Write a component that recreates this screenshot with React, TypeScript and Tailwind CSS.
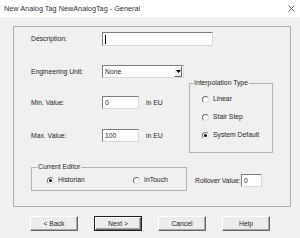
import React from "react";

function Radio({ label, checked, className = "" }: { label: string; checked?: boolean; className?: string }) {
  return (
    <div className={`flex items-center h-[8px] gap-[4px] ${className}`}>
      <span className="w-[7px] h-[7px] rounded-full bg-white border border-t-[#6e6e6e] border-l-[#6e6e6e] border-b-[#dcdcdc] border-r-[#dcdcdc] flex items-center justify-center shrink-0">
        {checked && <span className="w-[3px] h-[3px] rounded-full bg-black" />}
      </span>
      <span>{label}</span>
    </div>
  );
}

function TextBox({ value, w, h = 13, caret }: { value?: string; w: number; h?: number; caret?: boolean }) {
  return (
    <div
      className="bg-white border border-t-[#7f7f7f] border-l-[#7f7f7f] border-b-[#d9d9d9] border-r-[#d9d9d9] flex items-center pl-[2px]"
      style={{ width: w, height: h }}
    >
      {caret && <span className="w-px h-[9px] bg-black" />}
      {value}
    </div>
  );
}

function Button({ label, def }: { label: string; def?: boolean }) {
  return (
    <div className={`h-[15px] w-[48px] ${def ? "border border-[#222]" : ""}`}>
      <div className="h-full w-full bg-[#ececec] border border-t-white border-l-white border-b-[#696969] border-r-[#696969] shadow-[inset_-1px_-1px_0_#a6a6a6] flex items-center justify-center">
        {label}
      </div>
    </div>
  );
}

export default function App() {
  return (
    <div className="w-[300px] h-[238px] bg-[#f0f0f0] text-[#1f1f1f] text-[6.8px] leading-[8px] font-['Liberation_Sans',Arial,sans-serif] overflow-hidden">
      {/* title bar */}
      <div className="h-[17px] bg-white flex items-center pl-[4px] pr-[5px] text-[7.3px] text-[#333]">
        <span className="flex-1">New Analog Tag NewAnalogTag - General</span>
        <svg width="7" height="7" viewBox="0 0 7 7" className="text-[#555]">
          <path d="M0.5 0.5 L6.5 6.5 M6.5 0.5 L0.5 6.5" stroke="currentColor" strokeWidth="0.9" />
        </svg>
      </div>

      {/* main panel */}
      <div className="ml-[13px] mt-[9px] w-[278px] h-[181px] border border-[#b0b0b0] pl-[17px] pt-[5px]">
        <div className="flex items-center h-[14px]">
          <span className="w-[71px]">Description:</span>
          <TextBox w={111} h={14} caret />
        </div>

        <div className="flex items-center h-[13px] mt-[19px]">
          <span className="w-[71px]">Engineering Unit:</span>
          <div className="w-[82px] h-[13px] bg-white border border-t-[#7f7f7f] border-l-[#7f7f7f] border-b-[#d9d9d9] border-r-[#d9d9d9] flex items-center pl-[2px] pr-px">
            <span className="flex-1">None</span>
            <span className="w-[8px] h-[11px] bg-[#ececec] border border-t-white border-l-white border-b-[#696969] border-r-[#696969] flex items-center justify-center">
              <svg width="5" height="3" viewBox="0 0 5 3">
                <path d="M0 0 H5 L2.5 3 Z" fill="#000" />
              </svg>
            </span>
          </div>
        </div>

        <div className="flex">
          <div className="w-[158px]">
            <div className="flex items-center h-[13px] mt-[18px]">
              <span className="w-[71px]">Min. Value:</span>
              <TextBox value="0" w={37} />
              <span className="ml-[7px]">in EU</span>
            </div>
            <div className="flex items-center h-[13px] mt-[20px]">
              <span className="w-[71px]">Max. Value:</span>
              <TextBox value="100" w={37} />
              <span className="ml-[7px]">in EU</span>
            </div>
          </div>
          <fieldset className="mt-px w-[84px] h-[74px] border border-[#b4b4b4]">
            <legend className="ml-[3px] px-px leading-[8px]">Interpolation Type</legend>
            <div className="pl-[12px]">
              <Radio label="Linear" className="mt-[8px]" />
              <Radio label="Stair Step" className="mt-[10px]" />
              <Radio label="System Default" checked className="mt-[10px]" />
            </div>
          </fieldset>
        </div>

        <div className="flex items-start mt-[10px]">
          <fieldset className="w-[156px] h-[28px] border border-[#b4b4b4]">
            <legend className="ml-[5px] px-px leading-[8px]">Current Editor</legend>
            <div className="flex mt-[5px] pl-[15px]">
              <Radio label="Historian" checked className="w-[86px]" />
              <Radio label="InTouch" />
            </div>
          </fieldset>
          <div className="flex items-center ml-[8px] mt-[11px]">
            <span className="w-[46px]">Rollover Value:</span>
            <TextBox value="0" w={21} />
          </div>
        </div>
      </div>

      {/* buttons */}
      <div className="flex gap-[16px] pl-[30px] mt-[9px]">
        <Button label="< Back" />
        <Button label="Next >" def />
        <Button label="Cancel" />
        <Button label="Help" />
      </div>
    </div>
  );
}
